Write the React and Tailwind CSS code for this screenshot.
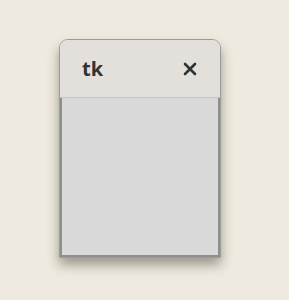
export default function App() {
  return (
    <div className="w-[289px] h-[300px] bg-[#eeeadf] flex pl-[59px] pt-[39px]" style={{ fontFamily: '"Open Sans", "DejaVu Sans", sans-serif' }}>
      <div className="w-[162px] h-[219px] flex flex-col rounded-t-[9px] border border-[#9c9b97] shadow-[0_7px_12px_rgba(60,55,40,0.45)] overflow-hidden">
        {/* Title bar */}
        <div className="h-[58px] bg-[#e3e0db] border-b border-[#c9c2b8] flex items-center justify-between pl-[22px] pr-[23px] shrink-0">
          <span className="text-[20px] font-bold text-[#2e3436] leading-none">tk</span>
          <svg width="14" height="14" viewBox="0 0 14 14" className="text-[#2e3436]">
            <path d="M2 2 L12 12 M12 2 L2 12" stroke="currentColor" strokeWidth="2.6" strokeLinecap="round" />
          </svg>
        </div>
        <div className="flex-1 bg-[#d9d9d9] border-x-2 border-b-2 border-[#8f8f8d]" />
      </div>
    </div>
  );
}
